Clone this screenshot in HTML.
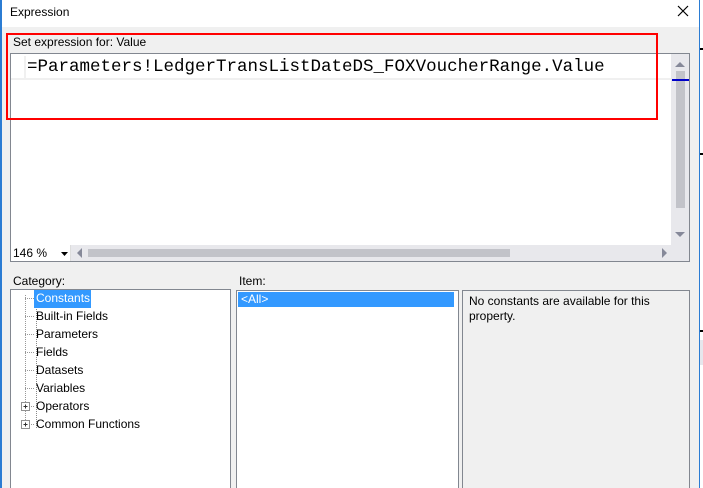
<!DOCTYPE html>
<html style="width:703px;height:488px;overflow:hidden"><head><meta charset="utf-8"><style>
*{margin:0;padding:0;box-sizing:border-box}
body{width:703px;height:488px;overflow:hidden;background:#fff;font-family:"Liberation Sans",sans-serif;font-size:12px;color:#000;position:relative}
.a{position:absolute}
.tree div{position:absolute;left:35px;height:18px;line-height:17px;font-size:12px;white-space:nowrap}
</style></head><body>
<div class="a" style="left:0;top:0;width:700px;height:488px;background:#f0f0f0;border-left:2px solid #2b7cd3;border-right:1px solid #2b7cd3"></div>
<div class="a" style="left:2px;top:0;width:697px;height:27px;background:#fff"></div>
<div class="a" style="left:10px;top:5px;font-size:12px">Expression</div>
<svg class="a" style="left:677px;top:5px" width="12" height="12"><path d="M1 1L11 11M11 1L1 11" stroke="#000" stroke-width="1.2"/></svg>
<div class="a" style="left:700px;top:0;width:3px;height:488px;background:#fff"></div>
<div class="a" style="left:700px;top:48px;width:3px;height:2px;background:#000"></div>
<div class="a" style="left:700px;top:153px;width:3px;height:2px;background:#000"></div>
<div class="a" style="left:700px;top:330px;width:3px;height:2px;background:#000"></div>
<div class="a" style="left:700px;top:340px;width:3px;height:25px;background:#e6e6ec"></div>
<div class="a" style="left:13px;top:35px;font-size:12px">Set expression for: Value</div>
<div class="a" style="left:10px;top:53px;width:680px;height:209px;border:1px solid #828790;background:#fff"></div>
<div class="a" style="left:11px;top:78px;width:660px;height:2px;background:#f0f0f0"></div>
<div class="a" style="left:24px;top:56px;width:2px;height:24px;background:#f0f0f0"></div>
<div class="a" style="left:27px;top:56px;font-family:'Liberation Mono',monospace;font-size:17.5px;line-height:22px">=Parameters!LedgerTransListDateDS_FOXVoucherRange.Value</div>
<div class="a" style="left:671px;top:54px;width:18px;height:191px;background:#e8e8ec"></div>
<div class="a" style="left:676px;top:71px;width:9px;height:137px;background:#c2c3c9"></div>
<svg class="a" style="left:674px;top:60px" width="12" height="8"><path d="M1 7L6 2L11 7Z" fill="#868999"/></svg>
<svg class="a" style="left:674px;top:231px" width="12" height="8"><path d="M1 1L6 6L11 1Z" fill="#868999"/></svg>
<div class="a" style="left:672px;top:79px;width:17px;height:2px;background:#0000c8"></div>
<div class="a" style="left:11px;top:245px;width:678px;height:16px;background:#e8e8ec"></div>
<div class="a" style="left:88px;top:249px;width:422px;height:8px;background:#c2c3c9"></div>
<svg class="a" style="left:76px;top:247px" width="8" height="12"><path d="M6 1L1 6L6 11Z" fill="#868999"/></svg>
<svg class="a" style="left:660px;top:247px" width="8" height="12"><path d="M2 1L7 6L2 11Z" fill="#868999"/></svg>
<div class="a" style="left:11px;top:245px;width:60px;height:16px;background:#fff;border-right:1px solid #ddd;font-size:12px;line-height:16px;padding-left:2px">146 %</div>
<svg class="a" style="left:61px;top:252px" width="7" height="4"><path d="M0 0L7 0L3.5 4Z" fill="#000"/></svg>
<div class="a" style="left:6px;top:33px;width:652px;height:87px;border:2px solid #f00"></div>
<div class="a" style="left:13px;top:274px;font-size:12px">Category:</div>
<div class="a" style="left:239px;top:274px;font-size:12px">Item:</div>
<div class="a tree" style="left:10px;top:289px;width:221px;height:205px;border:1px solid #828790;background:#fff">
<div style="left:25px;top:4px;width:1px;height:134px;border-left:1px dotted #888"></div>
<div style="left:23px;top:0;width:57px;height:18px;background:#3399ff;color:#fff;padding-left:2px">Constants</div>
<div style="left:25px;top:18px">Built-in Fields</div>
<div style="left:25px;top:36px">Parameters</div>
<div style="left:25px;top:54px">Fields</div>
<div style="left:25px;top:72px">Datasets</div>
<div style="left:25px;top:90px">Variables</div>
<div style="left:25px;top:108px">Operators</div>
<div style="left:25px;top:126px">Common Functions</div>
</div>
<svg class="a" style="left:19px;top:290px" width="16" height="140">
<g stroke="#999" stroke-dasharray="1,1"><path d="M6 8.5H15M6 26.5H15M6 44.5H15M6 62.5H15M6 80.5H15M6 98.5H15M10 116.5H15M10 134.5H15M6.5 5V131"/></g>
<rect x="2.5" y="112.5" width="8" height="8" fill="#fff" stroke="#919191"/><path d="M4.5 116.5H8.5M6.5 114.5V118.5" stroke="#333"/>
<rect x="2.5" y="130.5" width="8" height="8" fill="#fff" stroke="#919191"/><path d="M4.5 134.5H8.5M6.5 132.5V136.5" stroke="#333"/>
</svg>
<div class="a" style="left:236px;top:290px;width:223px;height:204px;border:1px solid #828790;background:#fff"></div>
<div class="a" style="left:238px;top:292px;width:216px;height:15px;background:#3399ff;color:#fff;font-size:12px;line-height:15px;padding-left:3px">&lt;All&gt;</div>
<div class="a" style="left:462px;top:290px;width:228px;height:204px;border:1px solid #828790;background:#f0f0f0;padding:3px 6px;font-size:12px;line-height:15px">No constants are available for this property.</div>
</body></html>
